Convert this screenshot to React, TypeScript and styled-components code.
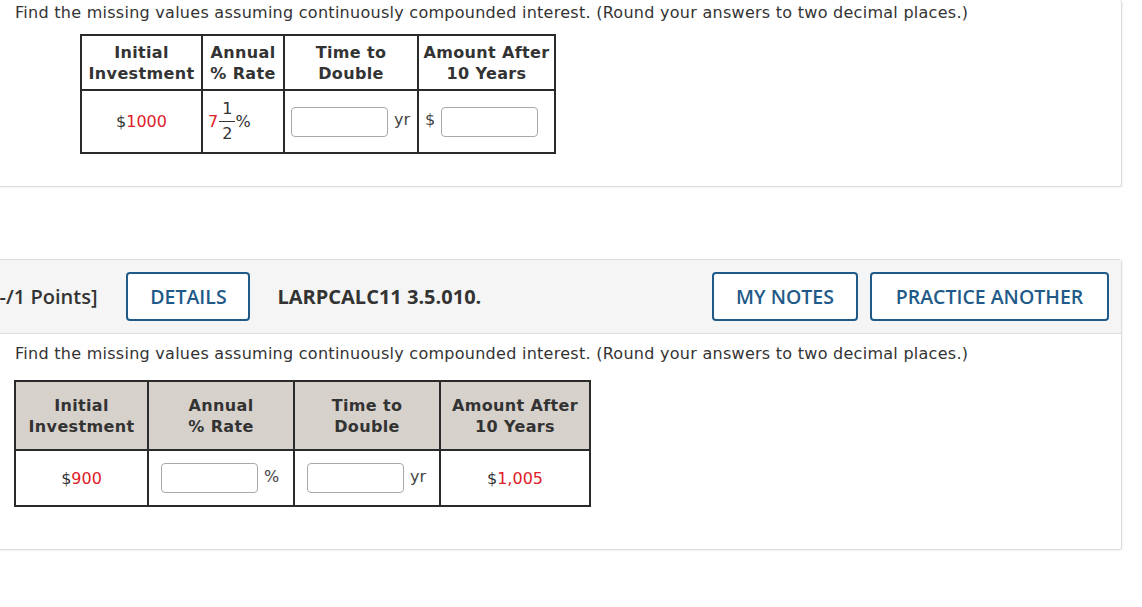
import React from "react";
import styled, { createGlobalStyle } from "styled-components";

const Global = createGlobalStyle`
  html, body { margin: 0; padding: 0; background: #fff; }
  body { font-family: "DejaVu Sans", Verdana, sans-serif; color: #333; overflow: hidden; }
  *, *::before, *::after { box-sizing: border-box; }
`;

const Page = styled.div`
  width: 1142px;
  height: 607px;
  overflow: hidden;
`;

const Panel = styled.section`
  width: 1132px;
  margin-left: -10px;
  border: 1px solid #dcdcdc;
  border-radius: 3px;
  box-shadow: 1px 1px 2px rgba(0, 0, 0, 0.05);
  background: #fff;
`;

const TopPanel = styled(Panel)`
  border-top: none;
  padding: 3px 0 32px 24px;
  margin-bottom: 72px;
`;

const BottomPanel = styled(Panel)``;

const Prompt = styled.p`
  margin: 0;
  font-size: 16px;
  line-height: 20px;
  letter-spacing: 0.27px;
  color: #333;
`;

const Table = styled.table<{ $ml: number; $mt: number }>`
  border-collapse: separate;
  border-spacing: 0;
  border: 1px solid #2a2a2a;
  margin-left: ${(p) => p.$ml}px;
  margin-top: ${(p) => p.$mt}px;
  font-size: 16px;
`;

const Th = styled.th<{ $w: number; $h: number; $shade?: boolean }>`
  border: 1px solid #2a2a2a;
  width: ${(p) => p.$w}px;
  height: ${(p) => p.$h}px;
  padding: 0 1px;
  background: ${(p) => (p.$shade ? "#d6d1cb" : "#fff")};
  font-weight: bold;
  letter-spacing: 0.35px;
  color: #333;
  line-height: 21px;
  text-align: center;
  white-space: nowrap;
`;

const Td = styled.td<{ $h: number; $align?: string; $pl?: number }>`
  border: 1px solid #2a2a2a;
  height: ${(p) => p.$h}px;
  padding: 0 6px 0 ${(p) => (p.$pl !== undefined ? p.$pl : 6)}px;
  text-align: ${(p) => p.$align || "center"};
  vertical-align: middle;
  color: #333;
`;

const Red = styled.span`
  color: #e0202a;
`;

const CellRow = styled.div`
  display: flex;
  align-items: center;
  gap: 6px;
`;

const Input = styled.input`
  width: 97px;
  height: 30px;
  border: 1px solid #a9a9a9;
  border-radius: 4px;
  background: #fff;
  padding: 0 6px;
  font-size: 15px;
`;

const Unit = styled.span<{ $raise?: number }>`
  font-size: 16px;
  color: #444;
  position: relative;
  top: ${(p) => -(p.$raise || 0)}px;
`;

const Mixed = styled.span`
  display: inline-flex;
  align-items: center;
  font-size: 16px;
  line-height: 18px;
`;

const Frac = styled.span`
  display: inline-flex;
  flex-direction: column;
  align-items: stretch;
  text-align: center;
  font-size: 16px;
  line-height: 16px;
  margin: 0 0 0 1px;
`;

const Num = styled.span`
  display: block;
  border-bottom: 1px solid #333;
  padding: 0 3px 4px;
`;

const Den = styled.span`
  display: block;
  padding-top: 4px;
`;

const HeaderBar = styled.div`
  display: flex;
  align-items: center;
  height: 74px;
  padding: 0 12px 0 2px;
  background: #f5f5f5;
  border-bottom: 1px solid #dcdcdc;
  font-family: "Open Sans", "Liberation Sans", sans-serif;
`;

const Points = styled.span`
  font-size: 20px;
  font-weight: 600;
  color: #333;
  margin-right: 29px;
`;

const Btn = styled.button<{ $w: number }>`
  height: 49px;
  width: ${(p) => p.$w}px;
  border: 2px solid #1f5a89;
  border-radius: 4px;
  background: #fff;
  color: #1f5a89;
  font-family: "Open Sans", "Liberation Sans", sans-serif;
  font-size: 19.5px;
  font-weight: 600;
  padding: 0;
  cursor: pointer;
`;

const Code = styled.span`
  font-size: 20px;
  font-weight: 700;
  color: #333;
  margin-left: 27px;
  flex: 1;
`;

const BtnGroup = styled.div`
  display: flex;
  gap: 12px;
`;

const Body = styled.div`
  padding: 10px 0 42px 24px;
`;

export default function App() {
  return (
    <Page>
      <Global />
      <TopPanel>
        <Prompt>
          Find the missing values assuming continuously compounded interest. (Round your answers to two decimal places.)
        </Prompt>
        <Table $ml={65} $mt={11}>
          <thead>
            <tr>
              <Th $w={121} $h={55}>Initial<br />Investment</Th>
              <Th $w={82} $h={55}>Annual<br />% Rate</Th>
              <Th $w={134} $h={55}>Time to<br />Double</Th>
              <Th $w={137} $h={55}>Amount After<br />10 Years</Th>
            </tr>
          </thead>
          <tbody>
            <tr>
              <Td $h={63}>
                $<Red>1000</Red>
              </Td>
              <Td $h={63} $align="left" $pl={5}>
                <Mixed>
                  <Red>7</Red>
                  <Frac>
                    <Num>1</Num>
                    <Den>2</Den>
                  </Frac>
                  %
                </Mixed>
              </Td>
              <Td $h={63}>
                <CellRow>
                  <Input aria-label="time to double" />
                  <Unit $raise={2}>yr</Unit>
                </CellRow>
              </Td>
              <Td $h={63}>
                <CellRow>
                  <Unit $raise={2}>$</Unit>
                  <Input aria-label="amount after 10 years" />
                </CellRow>
              </Td>
            </tr>
          </tbody>
        </Table>
      </TopPanel>

      <BottomPanel>
        <HeaderBar>
          <Points>[-/1 Points]</Points>
          <Btn $w={124}>DETAILS</Btn>
          <Code>LARPCALC11 3.5.010.</Code>
          <BtnGroup>
            <Btn $w={146}>MY NOTES</Btn>
            <Btn $w={239}>PRACTICE ANOTHER</Btn>
          </BtnGroup>
        </HeaderBar>
        <Body>
          <Prompt>
            Find the missing values assuming continuously compounded interest. (Round your answers to two decimal places.)
          </Prompt>
          <Table $ml={-1} $mt={16}>
            <thead>
              <tr>
                <Th $shade $w={133} $h={69}>Initial<br />Investment</Th>
                <Th $shade $w={146} $h={69}>Annual<br />% Rate</Th>
                <Th $shade $w={146} $h={69}>Time to<br />Double</Th>
                <Th $shade $w={150} $h={69}>Amount After<br />10 Years</Th>
              </tr>
            </thead>
            <tbody>
              <tr>
                <Td $h={56}>
                  $<Red>900</Red>
                </Td>
                <Td $h={56} $align="left" $pl={12}>
                  <CellRow>
                    <Input aria-label="annual rate" />
                    <Unit $raise={2}>%</Unit>
                  </CellRow>
                </Td>
                <Td $h={56} $align="left" $pl={12}>
                  <CellRow>
                    <Input aria-label="time to double" />
                    <Unit $raise={2}>yr</Unit>
                  </CellRow>
                </Td>
                <Td $h={56}>
                  $<Red>1,005</Red>
                </Td>
              </tr>
            </tbody>
          </Table>
        </Body>
      </BottomPanel>
    </Page>
  );
}
